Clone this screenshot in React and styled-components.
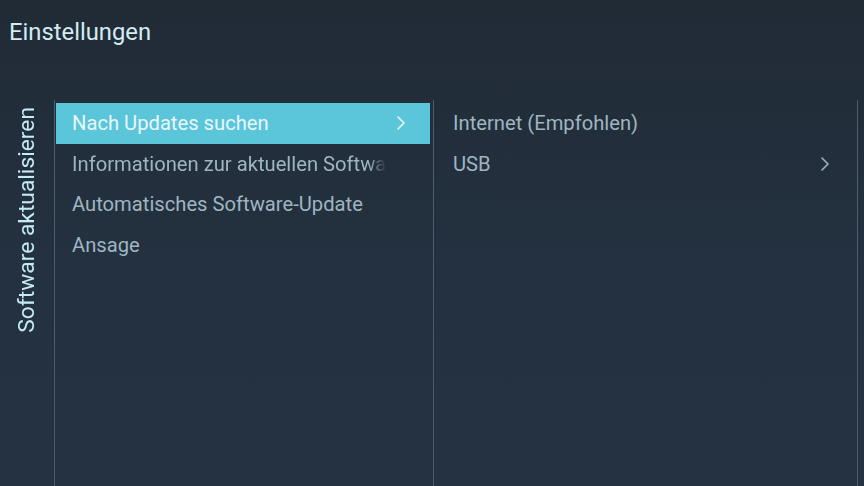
import React from "react";
import styled, { createGlobalStyle } from "styled-components";

const GlobalStyle = createGlobalStyle`
  html, body {
    margin: 0;
    padding: 0;
    background: #222c37;
  }
  #root {
    height: 100vh;
  }
`;

const menu = [
  { label: "Nach Updates suchen", active: true, arrow: true },
  { label: "Informationen zur aktuellen Software", fade: true },
  { label: "Automatisches Software-Update" },
  { label: "Ansage" },
];

const options = [
  { label: "Internet (Empfohlen)" },
  { label: "USB", arrow: true },
];

const Chevron = () => (
  <svg width="10" height="16" viewBox="0 0 10 16" fill="none">
    <polyline points="2,2 8,8 2,14" stroke="currentColor" strokeWidth="1.6" strokeLinecap="round" strokeLinejoin="round" />
  </svg>
);

const App = () => {
  return (
    <Screen>
      <GlobalStyle />
      <Header>Einstellungen</Header>
      <Body>
        <Side>
          <SideLabel>Software aktualisieren</SideLabel>
        </Side>
        <Column $width={379}>
          {menu.map((item) => (
            <Row key={item.label} $active={item.active} $inset="0 3px 0 1px">
              <Label $fade={item.fade}>{item.label}</Label>
              {item.arrow && <Arrow>{<Chevron />}</Arrow>}
            </Row>
          ))}
        </Column>
        <Column $width={424}>
          {options.map((item) => (
            <Row key={item.label} $inset="0 3px 0 3px">
              <Label>{item.label}</Label>
              {item.arrow && <Arrow>{<Chevron />}</Arrow>}
            </Row>
          ))}
        </Column>
      </Body>
    </Screen>
  );
};

export default App;

const Screen = styled.div`
  height: 486px;
  width: 864px;
  overflow: hidden;
  display: flex;
  flex-direction: column;
  background: linear-gradient(180deg, #212b36 0%, #243140 55%, #243241 100%);
  font-family: Roboto, "Noto Sans", sans-serif;
`;

const Header = styled.div`
  height: 100px;
  box-sizing: border-box;
  padding: 18px 0 0 9px;
  font-size: 23.8px;
  color: #d3ecf4;
`;

const Body = styled.div`
  flex: 1;
  display: flex;
`;

const Side = styled.div`
  width: 54px;
  border-right: 1px solid #4b5d6c;
  display: flex;
  justify-content: center;
  align-items: flex-start;
  padding-top: 7px;
`;

const SideLabel = styled.div`
  writing-mode: vertical-rl;
  transform: rotate(180deg);
  font-size: 22.8px;
  color: #c4eaf5;
  line-height: 1;
  white-space: nowrap;
`;

const Column = styled.div`
  width: ${(p) => p.$width}px;
  border-right: 1px solid #4b5d6c;
  padding-top: 3px;
  box-sizing: border-box;
`;

const Row = styled.div`
  height: 40.6px;
  display: flex;
  align-items: center;
  justify-content: space-between;
  padding: 0 24px 0 16px;
  margin: ${(p) => p.$inset};
  box-sizing: border-box;
  background: ${(p) => (p.$active ? "#5bc5da" : "transparent")};
  color: ${(p) => (p.$active ? "#e9f7fb" : "#9fb5c1")};
`;

const Label = styled.span`
  font-size: 20.2px;
  white-space: nowrap;
  overflow: hidden;
  max-width: ${(p) => (p.$fade ? "314px" : "none")};
  mask-image: ${(p) =>
    p.$fade ? "linear-gradient(90deg, #000 0, #000 296px, transparent 314px)" : "none"};
`;

const Arrow = styled.span`
  display: flex;
  align-items: center;
  color: inherit;
`;
